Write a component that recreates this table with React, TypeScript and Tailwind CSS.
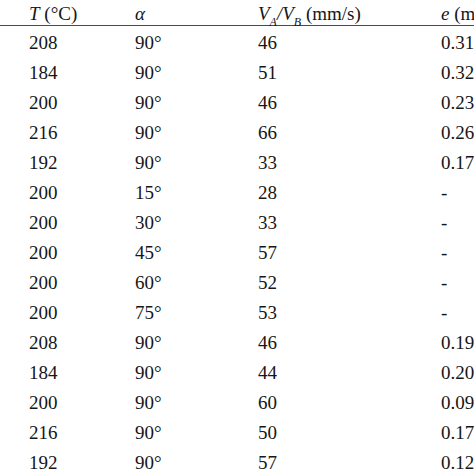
import React from 'react';

const rows: [string, string, string, string][] = [
  ['208', '90°', '46', '0.31'],
  ['184', '90°', '51', '0.32'],
  ['200', '90°', '46', '0.23'],
  ['216', '90°', '66', '0.26'],
  ['192', '90°', '33', '0.17'],
  ['200', '15°', '28', '-'],
  ['200', '30°', '33', '-'],
  ['200', '45°', '57', '-'],
  ['200', '60°', '52', '-'],
  ['200', '75°', '53', '-'],
  ['208', '90°', '46', '0.19'],
  ['184', '90°', '44', '0.20'],
  ['200', '90°', '60', '0.09'],
  ['216', '90°', '50', '0.17'],
  ['192', '90°', '57', '0.12'],
];

const cols = 'grid grid-cols-[106px_123px_183px_1fr] pl-[29px]';

export default function App() {
  return (
    <div className="w-[474px] h-[474px] overflow-hidden bg-white font-['Liberation_Serif','DejaVu_Serif',serif] text-[19px] text-[#161616] whitespace-nowrap">
      <div className={`${cols} h-[26px] pt-[1px] leading-[25px] border-b border-[#4a4a4a]`}>
        <div>
          <i>T</i> (°C)
        </div>
        <div>
          <i>α</i>
        </div>
        <div>
          <i>V</i>
          <sub className="italic text-[12px] align-[-3px]">A</sub>
          <i>/V</i>
          <sub className="italic text-[12px] align-[-3px]">B</sub> (mm/s)
        </div>
        <div>
          <i>e</i> (mm)
        </div>
      </div>
      {rows.map((r, i) => (
        <div key={i} className={`${cols} h-[30px] pt-[4px] leading-[26px]`}>
          {r.map((c, j) => (
            <div key={j}>{c}</div>
          ))}
        </div>
      ))}
    </div>
  );
}
